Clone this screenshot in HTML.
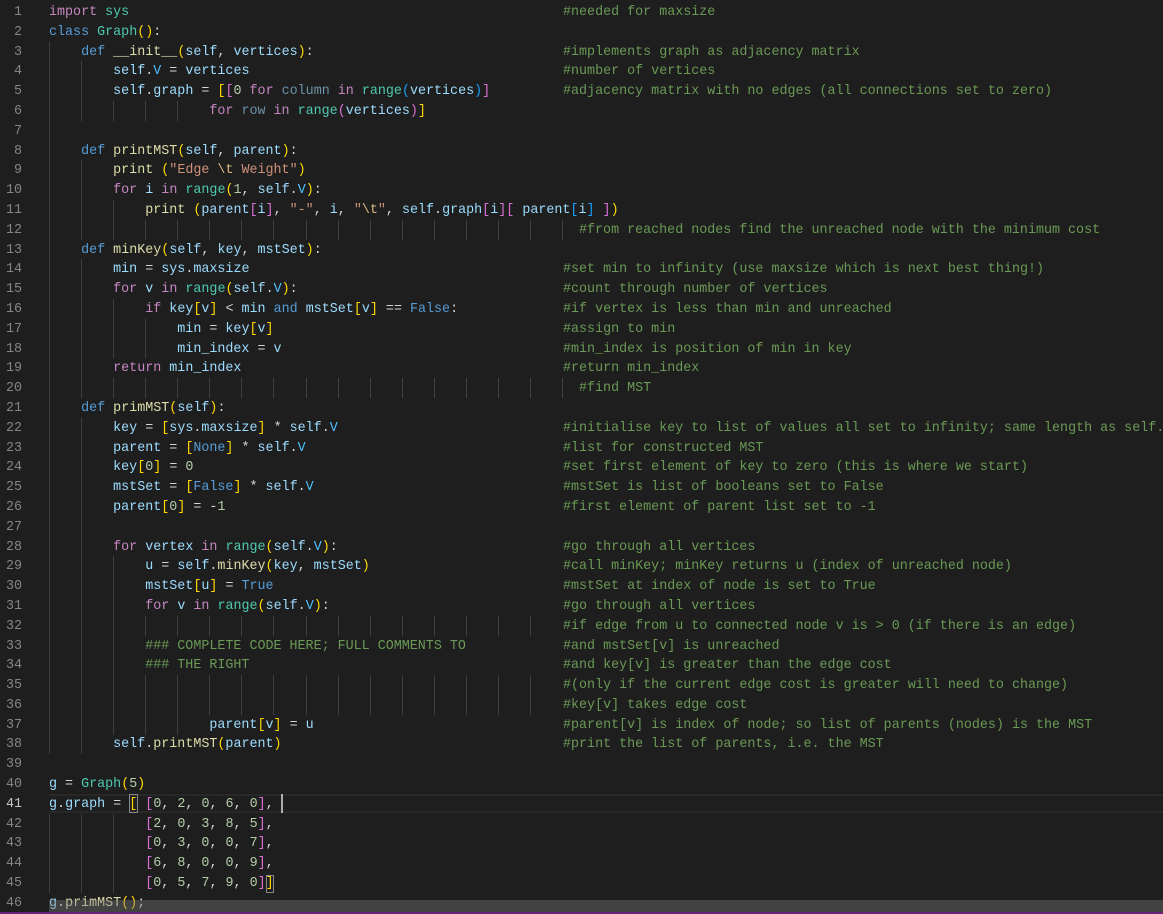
<!DOCTYPE html>
<html><head><meta charset="utf-8"><style>
html,body{margin:0;padding:0;width:1163px;height:914px;overflow:hidden;background:#1e1e1e}
#wrap{position:absolute;left:0;top:0;width:1163px;height:914px;overflow:hidden}
#h1,#h2{position:absolute;left:49px;right:0;height:2px;background:#282828}
#h1{top:794px}#h2{top:811px}
svg{position:absolute;left:0;top:0}
#num,#code{position:absolute;top:3px;font:13.36px/19.8px "Liberation Mono",monospace}
#num{left:0;width:22px;text-align:right;color:#858585;white-space:pre}
#num b{font-weight:normal;color:#c6c6c6}
#code{left:49px;width:1114px;overflow:hidden;color:#d4d4d4;white-space:normal}
#code div{height:19.8px;position:relative;white-space:pre}
.k{color:#c586c0}.b{color:#569cd6}.f{color:#dcdcaa}.v{color:#9cdcfe}.t{color:#4ec9b0}.s{color:#ce9178}.n{color:#b5cea8}.c{color:#6a9955}.y{color:#ffd700}.p{color:#da70d6}.l{color:#179fff}.u{color:#9cdcfe;opacity:.6}.w{color:#4fc1ff}.e{color:#d7ba7d}
.r{position:absolute;left:514px;top:0;color:#6a9955}.q{position:absolute;left:530px;top:0;color:#6a9955}
#box1,#box2{position:absolute;border:1px solid #888;box-sizing:border-box}
#box1{left:129px;top:794px;width:9px;height:19px}
#box2{left:266px;top:875px;width:8px;height:18px}
#cur{position:absolute;left:281px;top:794px;width:2px;height:19px;background:#aeafad}
#sb{position:absolute;left:49px;right:0;top:900px;height:12px;background:rgba(121,121,121,.4)}
#st{position:absolute;left:0;right:0;top:912px;height:2px;background:#68217a}
</style></head><body><div id="wrap">
<div id="h1"></div><div id="h2"></div>
<svg width="1163" height="914" fill="none" stroke="#404040" stroke-width="1" shape-rendering="crispEdges">
<path d="M49.5 42V754M49.5 814V893
M81.5 61V121M81.5 160V240M81.5 259V398M81.5 418V754M81.5 814V893
M113.5 101V121M113.5 200V240M113.5 299V358M113.5 378V398M113.5 556V735M113.5 814V893
M145.5 101V121M145.5 220V240M145.5 319V358M145.5 378V398M145.5 616V636M145.5 675V735
M177.5 101V121M177.5 220V240M177.5 378V398M177.5 616V636M177.5 675V735
M209.5 220V240M209.5 378V398M209.5 616V636M209.5 675V715
M241.5 220V240M241.5 378V398M241.5 616V636M241.5 675V715
M273.5 220V240M273.5 378V398M273.5 616V636M273.5 675V715
M306.5 220V240M306.5 378V398M306.5 616V636M306.5 675V715
M338.5 220V240M338.5 378V398M338.5 616V636M338.5 675V715
M370.5 220V240M370.5 378V398M370.5 616V636M370.5 675V715
M402.5 220V240M402.5 378V398M402.5 616V636M402.5 675V715
M434.5 220V240M434.5 378V398M434.5 616V636M434.5 675V715
M466.5 220V240M466.5 378V398M466.5 616V636M466.5 675V715
M498.5 220V240M498.5 378V398M498.5 616V636M498.5 675V715
M530.5 220V240M530.5 378V398M530.5 616V636M530.5 675V715
M562.5 220V240M562.5 378V398"/>
</svg>
<div id="num">1
2
3
4
5
6
7
8
9
10
11
12
13
14
15
16
17
18
19
20
21
22
23
24
25
26
27
28
29
30
31
32
33
34
35
36
37
38
39
40
<b>41</b>
42
43
44
45
46</div>
<div id="code">
<div><span class="k">import</span> <span class="t">sys</span><span class="r">#needed for maxsize</span></div>
<div><span class="b">class</span> <span class="t">Graph</span><span class="y">()</span>:</div>
<div>    <span class="b">def</span> <span class="f">__init__</span><span class="y">(</span><span class="v">self</span>, <span class="v">vertices</span><span class="y">)</span>:<span class="r">#implements graph as adjacency matrix</span></div>
<div>        <span class="v">self</span>.<span class="w">V</span> = <span class="v">vertices</span><span class="r">#number of vertices</span></div>
<div>        <span class="v">self</span>.<span class="v">graph</span> = <span class="y">[</span><span class="p">[</span><span class="n">0</span> <span class="k">for</span> <span class="u">column</span> <span class="k">in</span> <span class="t">range</span><span class="l">(</span><span class="v">vertices</span><span class="l">)</span><span class="p">]</span><span class="r">#adjacency matrix with no edges (all connections set to zero)</span></div>
<div>                    <span class="k">for</span> <span class="u">row</span> <span class="k">in</span> <span class="t">range</span><span class="p">(</span><span class="v">vertices</span><span class="p">)</span><span class="y">]</span></div>
<div> </div>
<div>    <span class="b">def</span> <span class="f">printMST</span><span class="y">(</span><span class="v">self</span>, <span class="v">parent</span><span class="y">)</span>:</div>
<div>        <span class="f">print</span> <span class="y">(</span><span class="s">"Edge </span><span class="e">\t</span><span class="s"> Weight"</span><span class="y">)</span></div>
<div>        <span class="k">for</span> <span class="v">i</span> <span class="k">in</span> <span class="t">range</span><span class="y">(</span><span class="n">1</span>, <span class="v">self</span>.<span class="w">V</span><span class="y">)</span>:</div>
<div>            <span class="f">print</span> <span class="y">(</span><span class="v">parent</span><span class="p">[</span><span class="v">i</span><span class="p">]</span>, <span class="s">"-"</span>, <span class="v">i</span>, <span class="s">"</span><span class="e">\t</span><span class="s">"</span>, <span class="v">self</span>.<span class="v">graph</span><span class="p">[</span><span class="v">i</span><span class="p">][</span> <span class="v">parent</span><span class="l">[</span><span class="v">i</span><span class="l">]</span> <span class="p">]</span><span class="y">)</span></div>
<div><span class="q">#from reached nodes find the unreached node with the minimum cost</span> </div>
<div>    <span class="b">def</span> <span class="f">minKey</span><span class="y">(</span><span class="v">self</span>, <span class="v">key</span>, <span class="v">mstSet</span><span class="y">)</span>:</div>
<div>        <span class="v">min</span> = <span class="v">sys</span>.<span class="v">maxsize</span><span class="r">#set min to infinity (use maxsize which is next best thing!)</span></div>
<div>        <span class="k">for</span> <span class="v">v</span> <span class="k">in</span> <span class="t">range</span><span class="y">(</span><span class="v">self</span>.<span class="w">V</span><span class="y">)</span>:<span class="r">#count through number of vertices</span></div>
<div>            <span class="k">if</span> <span class="v">key</span><span class="y">[</span><span class="v">v</span><span class="y">]</span> &lt; <span class="v">min</span> <span class="b">and</span> <span class="v">mstSet</span><span class="y">[</span><span class="v">v</span><span class="y">]</span> == <span class="b">False</span>:<span class="r">#if vertex is less than min and unreached</span></div>
<div>                <span class="v">min</span> = <span class="v">key</span><span class="y">[</span><span class="v">v</span><span class="y">]</span><span class="r">#assign to min</span></div>
<div>                <span class="v">min_index</span> = <span class="v">v</span><span class="r">#min_index is position of min in key</span></div>
<div>        <span class="k">return</span> <span class="v">min_index</span><span class="r">#return min_index</span></div>
<div><span class="q">#find MST</span> </div>
<div>    <span class="b">def</span> <span class="f">primMST</span><span class="y">(</span><span class="v">self</span><span class="y">)</span>:</div>
<div>        <span class="v">key</span> = <span class="y">[</span><span class="v">sys</span>.<span class="v">maxsize</span><span class="y">]</span> * <span class="v">self</span>.<span class="w">V</span><span class="r">#initialise key to list of values all set to infinity; same length as self.V</span></div>
<div>        <span class="v">parent</span> = <span class="y">[</span><span class="b">None</span><span class="y">]</span> * <span class="v">self</span>.<span class="w">V</span><span class="r">#list for constructed MST</span></div>
<div>        <span class="v">key</span><span class="y">[</span><span class="n">0</span><span class="y">]</span> = <span class="n">0</span><span class="r">#set first element of key to zero (this is where we start)</span></div>
<div>        <span class="v">mstSet</span> = <span class="y">[</span><span class="b">False</span><span class="y">]</span> * <span class="v">self</span>.<span class="w">V</span><span class="r">#mstSet is list of booleans set to False</span></div>
<div>        <span class="v">parent</span><span class="y">[</span><span class="n">0</span><span class="y">]</span> = -<span class="n">1</span><span class="r">#first element of parent list set to -1</span></div>
<div> </div>
<div>        <span class="k">for</span> <span class="v">vertex</span> <span class="k">in</span> <span class="t">range</span><span class="y">(</span><span class="v">self</span>.<span class="w">V</span><span class="y">)</span>:<span class="r">#go through all vertices</span></div>
<div>            <span class="v">u</span> = <span class="v">self</span>.<span class="f">minKey</span><span class="y">(</span><span class="v">key</span>, <span class="v">mstSet</span><span class="y">)</span><span class="r">#call minKey; minKey returns u (index of unreached node)</span></div>
<div>            <span class="v">mstSet</span><span class="y">[</span><span class="v">u</span><span class="y">]</span> = <span class="b">True</span><span class="r">#mstSet at index of node is set to True</span></div>
<div>            <span class="k">for</span> <span class="v">v</span> <span class="k">in</span> <span class="t">range</span><span class="y">(</span><span class="v">self</span>.<span class="w">V</span><span class="y">)</span>:<span class="r">#go through all vertices</span></div>
<div> <span class="r">#if edge from u to connected node v is &gt; 0 (if there is an edge)</span></div>
<div>            <span class="c">### COMPLETE CODE HERE; FULL COMMENTS TO</span><span class="r">#and mstSet[v] is unreached</span></div>
<div>            <span class="c">### THE RIGHT</span><span class="r">#and key[v] is greater than the edge cost</span></div>
<div> <span class="r">#(only if the current edge cost is greater will need to change)</span></div>
<div> <span class="r">#key[v] takes edge cost</span></div>
<div>                    <span class="v">parent</span><span class="y">[</span><span class="v">v</span><span class="y">]</span> = <span class="v">u</span><span class="r">#parent[v] is index of node; so list of parents (nodes) is the MST</span></div>
<div>        <span class="v">self</span>.<span class="f">printMST</span><span class="y">(</span><span class="v">parent</span><span class="y">)</span><span class="r">#print the list of parents, i.e. the MST</span></div>
<div> </div>
<div><span class="v">g</span> = <span class="t">Graph</span><span class="y">(</span><span class="n">5</span><span class="y">)</span></div>
<div><span class="v">g</span>.<span class="v">graph</span> = <span class="y">[</span> <span class="p">[</span><span class="n">0</span>, <span class="n">2</span>, <span class="n">0</span>, <span class="n">6</span>, <span class="n">0</span><span class="p">]</span>, </div>
<div>            <span class="p">[</span><span class="n">2</span>, <span class="n">0</span>, <span class="n">3</span>, <span class="n">8</span>, <span class="n">5</span><span class="p">]</span>,</div>
<div>            <span class="p">[</span><span class="n">0</span>, <span class="n">3</span>, <span class="n">0</span>, <span class="n">0</span>, <span class="n">7</span><span class="p">]</span>,</div>
<div>            <span class="p">[</span><span class="n">6</span>, <span class="n">8</span>, <span class="n">0</span>, <span class="n">0</span>, <span class="n">9</span><span class="p">]</span>,</div>
<div>            <span class="p">[</span><span class="n">0</span>, <span class="n">5</span>, <span class="n">7</span>, <span class="n">9</span>, <span class="n">0</span><span class="p">]</span><span class="y">]</span></div>
<div><span class="v">g</span>.<span class="f">primMST</span><span class="y">()</span>;</div>
</div>
<div id="box1"></div><div id="box2"></div><div id="cur"></div>
<div id="sb"></div><div id="st"></div>
</div></body></html>
